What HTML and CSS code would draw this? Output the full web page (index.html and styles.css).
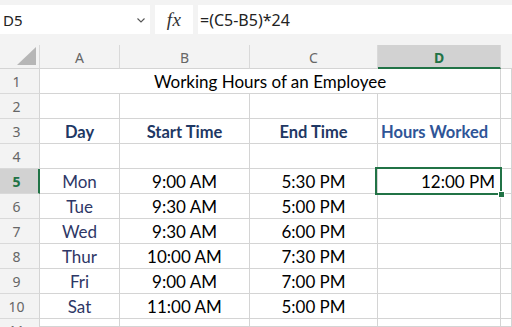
FILE: index.html
```html
<!DOCTYPE html>
<html>
<head>
<meta charset="utf-8">
<link rel="stylesheet" href="styles.css">
</head>
<body>
<div class="app">
  <div class="fbar">
    <div class="namebox"><span class="nb-text">D5</span>
      <svg class="chev" width="8" height="5" viewBox="0 0 8 5"><polyline points="0.5,0.5 4,4 7.5,0.5" fill="none" stroke="#555" stroke-width="1.1"/></svg>
    </div>
    <div class="fxbox"><span class="fx">fx</span></div>
    <div class="formula">=(C5-B5)*24</div>
  </div>
  <div class="sheet">
    <div class="ch corner"><span class="tri"></span></div>
    <div class="ch">A</div>
    <div class="ch">B</div>
    <div class="ch">C</div>
    <div class="ch ch-sel">D</div>
    <div class="ch ch-e"></div>

    <div class="rh">1</div>
    <div class="c title span4">Working Hours of an Employee</div>
    <div class="c"></div>

    <div class="rh">2</div>
    <div class="c"></div><div class="c"></div><div class="c"></div><div class="c"></div><div class="c"></div>

    <div class="rh">3</div>
    <div class="c hd">Day</div>
    <div class="c hd">Start Time</div>
    <div class="c hd">End Time</div>
    <div class="c hd hd2 left">Hours Worked</div>
    <div class="c"></div>

    <div class="rh">4</div>
    <div class="c"></div><div class="c"></div><div class="c"></div><div class="c"></div><div class="c"></div>

    <div class="rh rh-sel">5</div>
    <div class="c day">Mon</div>
    <div class="c">9:00 AM</div>
    <div class="c">5:30 PM</div>
    <div class="c right sel">12:00 PM<span class="handle"></span></div>
    <div class="c"></div>

    <div class="rh">6</div>
    <div class="c day">Tue</div>
    <div class="c">9:30 AM</div>
    <div class="c">5:00 PM</div>
    <div class="c"></div><div class="c"></div>

    <div class="rh">7</div>
    <div class="c day">Wed</div>
    <div class="c">9:30 AM</div>
    <div class="c">6:00 PM</div>
    <div class="c"></div><div class="c"></div>

    <div class="rh">8</div>
    <div class="c day">Thur</div>
    <div class="c">10:00 AM</div>
    <div class="c">7:30 PM</div>
    <div class="c"></div><div class="c"></div>

    <div class="rh">9</div>
    <div class="c day">Fri</div>
    <div class="c">9:00 AM</div>
    <div class="c">7:00 PM</div>
    <div class="c"></div><div class="c"></div>

    <div class="rh">10</div>
    <div class="c day">Sat</div>
    <div class="c">11:00 AM</div>
    <div class="c">5:00 PM</div>
    <div class="c"></div><div class="c"></div>

    <div class="rh rh-last">11</div>
    <div class="c"></div><div class="c"></div><div class="c"></div><div class="c"></div><div class="c"></div>
  </div>
</div>
</body>
</html>
```
FILE: styles.css
```css
* { box-sizing: border-box; }
html, body { margin: 0; padding: 0; }
body {
  width: 512px;
  height: 327px;
  overflow: hidden;
  background: #f3f3f3;
}
.app { width: 512px; }
.fbar {
  display: flex;
  height: 45px;
  padding-top: 5px;
  padding-bottom: 11px;
  gap: 5px;
}
.namebox, .fxbox, .formula {
  background: #fff;
  height: 29px;
  display: flex;
  align-items: center;
}
.namebox {
  width: 150px;
  padding-left: 3px;
  padding-right: 4px;
  justify-content: space-between;
  font-family: "Noto Sans", sans-serif;
  font-size: 15px;
  color: #222;
}
.chev { margin-top: 2px; margin-right: 1px; }
.fxbox {
  width: 38px;
  justify-content: center;
}
.fx {
  font-family: "Liberation Serif", serif;
  font-style: italic;
  font-size: 19px;
  color: #333;
  letter-spacing: 0.5px;
}
.formula {
  flex: 1;
  padding-left: 2px;
  font-family: "Noto Sans", sans-serif;
  font-size: 16px;
  color: #222;
}
.sheet {
  display: grid;
  grid-template-columns: 40px 80px 130px 128px 123px 11px;
  grid-template-rows: 24px repeat(10, 25px) 8px;
  background: #fff;
  position: relative;
}
.ch {
  background: #f3f3f3;
  border-right: 1px solid #d9d9d9;
  border-bottom: 1px solid #d4d4d4;
  display: flex;
  align-items: center;
  justify-content: center;
  font-family: "Noto Sans", sans-serif;
  font-size: 14px;
  color: #666;
  padding-top: 1px;
}
.ch-e { border-right: none; }
.corner { position: relative; }
.tri {
  position: absolute;
  right: 3px;
  bottom: 3px;
  width: 0;
  height: 0;
  border-left: 19px solid transparent;
  border-bottom: 18px solid #b6b6b6;
}
.ch-sel {
  background: #d2d2d2;
  border-bottom: 2px solid #217346;
  color: #217346;
  font-weight: 700;
  padding-top: 2px;
}
.rh {
  background: #f3f3f3;
  border-right: 1px solid #d4d4d4;
  border-bottom: 1px solid #d9d9d9;
  display: flex;
  align-items: center;
  justify-content: center;
  padding-right: 6px;
  font-family: "Noto Sans", sans-serif;
  font-size: 14px;
  color: #666;
}
.rh-last {
  align-items: flex-start;
  overflow: hidden;
  line-height: 14px;
  padding-top: 5px;
  border-bottom: none;
}
.rh-sel {
  background: #d2d2d2;
  border-right: 2px solid #217346;
  color: #217346;
  font-weight: 700;
  padding-right: 5px;
}
.c {
  border-right: 1px solid #d4d4d4;
  border-bottom: 1px solid #d4d4d4;
  display: flex;
  align-items: flex-end;
  justify-content: center;
  padding-bottom: 1px;
  font-family: "Lato", sans-serif;
  font-size: 17px;
  color: #000;
  white-space: nowrap;
  line-height: 20px;
}
.span4 { grid-column: span 4; }
.title { color: #000; }
.hd {
  font-weight: 700;
  font-size: 16.5px;
  color: #1f3864;
}
.hd2 { color: #2f5597; }
.left { justify-content: flex-start; padding-left: 3px; }
.right { justify-content: flex-end; padding-right: 5px; }
.day { color: #2e3766; }
.sel { position: relative; }
.sel::after {
  content: "";
  position: absolute;
  left: -3px;
  top: -2px;
  right: -2px;
  bottom: -2px;
  border: 2px solid #217346;
}
.handle {
  position: absolute;
  right: -5px;
  bottom: -5px;
  width: 7px;
  height: 7px;
  background: #217346;
  border: 1px solid #fff;
  z-index: 2;
}
```
